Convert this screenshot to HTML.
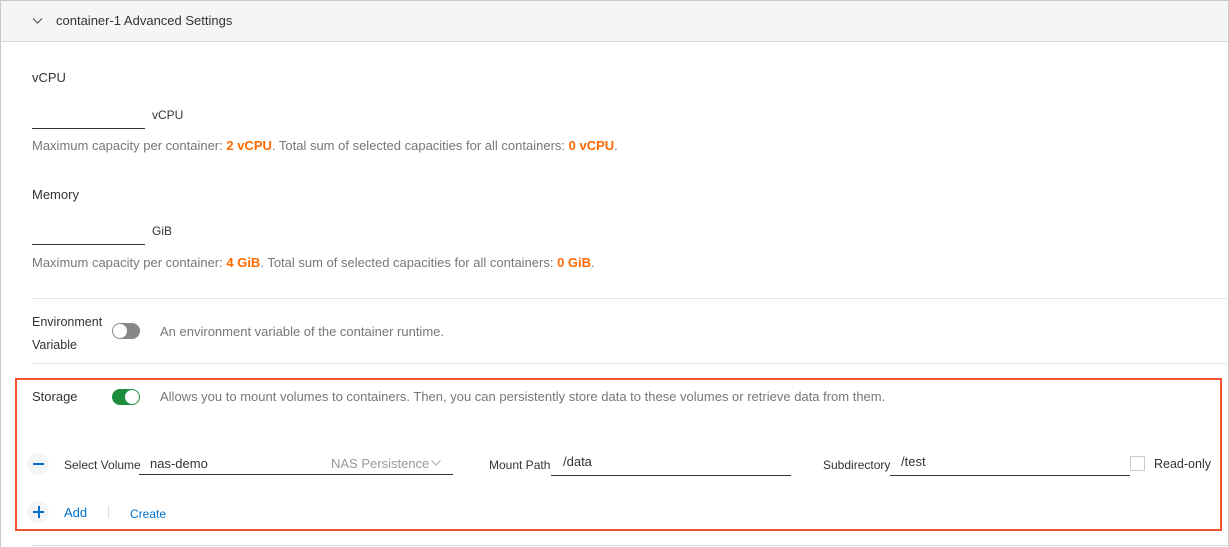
<!DOCTYPE html>
<html><head><style>
*{margin:0;padding:0;box-sizing:border-box}
body{width:1229px;height:547px;background:#fff;font-family:"Liberation Sans",sans-serif;font-size:13px;color:#333;position:relative;overflow:hidden}
.a{position:absolute;white-space:nowrap}
.g{color:#777}
.o{color:#ff6a00;font-weight:bold}
.ln{position:absolute;height:1px;background:#e5e5e5}
.ul{position:absolute;height:1px;background:#333}
.b{color:#0070cc}
.s{font-size:12px}
</style></head><body>
<div class="a" style="left:0;top:0;width:1229px;height:547px;border:1px solid #c8c8c8;border-bottom:none"></div>
<div class="a" style="left:1px;top:1px;width:1227px;height:41px;background:#f5f5f5;border-bottom:1px solid #d8d8d8"></div>
<svg class="a" style="left:32px;top:17px" width="11" height="8"><path d="M1 1.5L5.5 6L10 1.5" stroke="#555" fill="none" stroke-width="1.2"/></svg>
<div class="a" style="left:56px;top:13px;font-size:13px">container-1 Advanced Settings</div>

<div class="a" style="left:32px;top:70px">vCPU</div>
<div class="ul" style="left:32px;top:128px;width:113px"></div>
<div class="a s" style="left:152px;top:108px">vCPU</div>
<div class="a g" style="left:32px;top:138px">Maximum capacity per container: <span class="o">2 vCPU</span>. Total sum of selected capacities for all containers: <span class="o">0 vCPU</span>.</div>

<div class="a" style="left:32px;top:187px">Memory</div>
<div class="ul" style="left:32px;top:244px;width:113px"></div>
<div class="a s" style="left:152px;top:224px">GiB</div>
<div class="a g" style="left:32px;top:255px">Maximum capacity per container: <span class="o">4 GiB</span>. Total sum of selected capacities for all containers: <span class="o">0 GiB</span>.</div>

<div class="ln" style="left:32px;top:298px;width:1197px"></div>
<div class="a" style="left:32px;top:311px;line-height:23px;font-size:12.5px">Environment<br>Variable</div>
<div class="a" style="left:112px;top:323px;width:28px;height:16px;border-radius:8px;background:#888"></div>
<div class="a" style="left:113px;top:324px;width:14px;height:14px;border-radius:7px;background:#fff"></div>
<div class="a g" style="left:160px;top:324px">An environment variable of the container runtime.</div>
<div class="ln" style="left:32px;top:363px;width:1197px"></div>

<div class="a" style="left:15px;top:378px;width:1207px;height:153px;border:2px solid #f0542f"></div>
<div class="a" style="left:32px;top:389px">Storage</div>
<div class="a" style="left:112px;top:389px;width:28px;height:16px;border-radius:8px;background:#1e8e3e"></div>
<div class="a" style="left:125px;top:390px;width:14px;height:14px;border-radius:7px;background:#fff"></div>
<div class="a g" style="left:160px;top:389px">Allows you to mount volumes to containers. Then, you can persistently store data to these volumes or retrieve data from them.</div>

<div class="a" style="left:27px;top:453px;width:22px;height:22px;border-radius:11px;background:#f5f5f5"></div>
<div class="a" style="left:33px;top:463px;width:11px;height:2px;background:#0070cc"></div>
<div class="a s" style="left:64px;top:458px">Select Volume</div>
<div class="a" style="left:150px;top:456px">nas-demo</div>
<div class="a" style="left:331px;top:456px;color:#999">NAS Persistence</div>
<svg class="a" style="left:431px;top:460px" width="10" height="6"><path d="M0.5 0.5L5 5L9.5 0.5" stroke="#aaa" fill="none"/></svg>
<div class="ul" style="left:139px;top:474px;width:314px"></div>
<div class="a s" style="left:489px;top:458px">Mount Path</div>
<div class="a" style="left:563px;top:454px">/data</div>
<div class="ul" style="left:551px;top:475px;width:240px"></div>
<div class="a s" style="left:823px;top:458px">Subdirectory</div>
<div class="a" style="left:901px;top:454px">/test</div>
<div class="ul" style="left:890px;top:475px;width:240px"></div>
<div class="a" style="left:1130px;top:456px;width:15px;height:15px;border:1px solid #ccc"></div>
<div class="a" style="left:1154px;top:457px;font-size:12.5px">Read-only</div>

<div class="a" style="left:27px;top:501px;width:22px;height:22px;border-radius:11px;background:#f5f5f5"></div>
<div class="a" style="left:33px;top:511px;width:11px;height:2px;background:#0070cc"></div>
<div class="a" style="left:37.5px;top:506px;width:2px;height:12px;background:#0070cc"></div>
<div class="a b" style="left:64px;top:505px">Add</div>
<div class="a" style="left:108px;top:506px;width:1px;height:12px;background:#ddd"></div>
<div class="a b s" style="left:130px;top:507px">Create</div>
<div class="ln" style="left:32px;top:545px;width:1197px;background:#d8d8d8"></div>
</body></html>
